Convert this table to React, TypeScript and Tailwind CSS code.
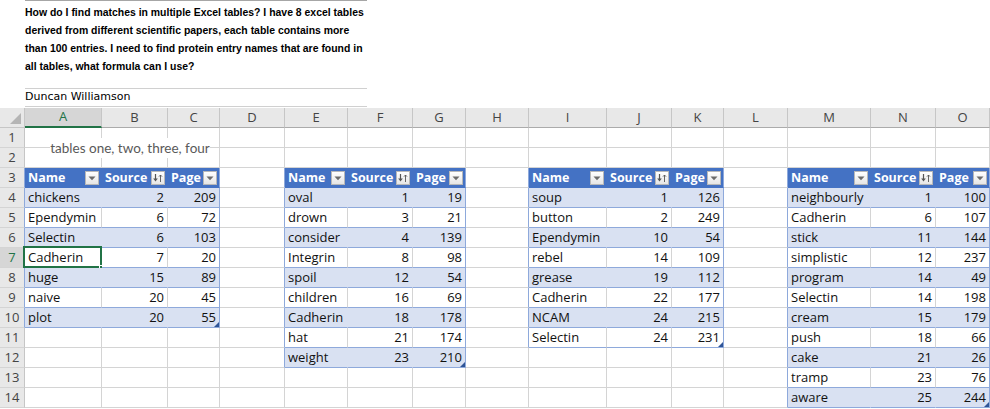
import React from "react";

const COLS = ["A", "B", "C", "D", "E", "F", "G", "H", "I", "J", "K", "L", "M", "N", "O"];

type Row = [string, number, number];

const TABLES: { start: number; rows: Row[] }[] = [
	{
		start: 0,
		rows: [
			["chickens", 2, 209],
			["Ependymin", 6, 72],
			["Selectin", 6, 103],
			["Cadherin", 7, 20],
			["huge", 15, 89],
			["naive", 20, 45],
			["plot", 20, 55],
		],
	},
	{
		start: 4,
		rows: [
			["oval", 1, 19],
			["drown", 3, 21],
			["consider", 4, 139],
			["Integrin", 8, 98],
			["spoil", 12, 54],
			["children", 16, 69],
			["Cadherin", 18, 178],
			["hat", 21, 174],
			["weight", 23, 210],
		],
	},
	{
		start: 8,
		rows: [
			["soup", 1, 126],
			["button", 2, 249],
			["Ependymin", 10, 54],
			["rebel", 14, 109],
			["grease", 19, 112],
			["Cadherin", 22, 177],
			["NCAM", 24, 215],
			["Selectin", 24, 231],
		],
	},
	{
		start: 12,
		rows: [
			["neighbourly", 1, 100],
			["Cadherin", 6, 107],
			["stick", 11, 144],
			["simplistic", 12, 237],
			["program", 14, 49],
			["Selectin", 14, 198],
			["cream", 15, 179],
			["push", 18, 66],
			["cake", 21, 26],
			["tramp", 23, 76],
			["aware", 25, 244],
		],
	},
];

const HEADERS = ["Name", "Source", "Page"];

function findTable(row: number, col: number) {
	for (const t of TABLES) {
		if (col >= t.start && col <= t.start + 2 && row >= 3 && row <= 3 + t.rows.length) {
			return t;
		}
	}
	return null;
}

function FilterButton({ sort }: { sort?: boolean }) {
	return (
		<span className="w-[14px] h-[14px] mr-[2px] shrink-0 flex items-center justify-center border border-[#b8b8b8] bg-gradient-to-b from-[#ffffff] to-[#e6e6e6]">
			{sort ? (
				<svg width="12" height="12" viewBox="0 0 12 12">
					<path d="M3.5 2v5" stroke="#555" strokeWidth="1.2" />
					<path d="M1.2 6.5h4.6L3.5 9.6z" fill="#555" />
					<path d="M8.5 3v7M7 4.6l1.5-1.6 1.5 1.6" stroke="#555" strokeWidth="0.9" fill="none" />
				</svg>
			) : (
				<svg width="10" height="10" viewBox="0 0 10 10">
					<path d="M1.5 3.5h7L5 7.2z" fill="#6b6b6b" />
				</svg>
			)}
		</span>
	);
}

function Cell({ row, col }: { row: number; col: number }) {
	const t = findTable(row, col);
	const nextT = col + 1 <= 14 ? findTable(row, col + 1) : null;
	const nextIsTableStart = !!nextT && nextT.start === col + 1;
	const selected = row === 7 && col === 0;

	if (t) {
		const k = col - t.start;
		const isLast = k === 2;
		if (row === 3) {
			return (
				<div
					className={`h-[20px] flex items-center justify-between pl-[3px] bg-[#4472c4] border-b border-b-[#4472c4] text-white font-bold text-[12.5px] ${
						isLast ? "border-r border-r-[#8ea9db]" : "border-r border-r-[#4472c4]"
					}`}
				>
					<span className="pt-[1px]">{HEADERS[k]}</span>
					<FilterButton sort={k === 1} />
				</div>
			);
		}
		const i = row - 4;
		const data = t.rows[i];
		const band = i % 2 === 0;
		const lastRow = i === t.rows.length - 1;
		const value = data[k];
		return (
			<div
				className={`relative h-[20px] flex items-center pt-[1px] text-[13px] text-[#111] border-b border-b-[#8ea9db] ${
					band ? "bg-[#d9e1f2]" : "bg-white"
				} ${
					isLast
						? "border-r border-r-[#8ea9db]"
						: band
							? "border-r border-r-[#d9e1f2]"
							: "border-r border-r-[#d4d4d4]"
				} ${k === 0 ? "justify-start pl-[3px]" : "justify-end pr-[3px]"}`}
			>
				<span>{value}</span>
				{selected && (
					<span className="absolute -top-[2px] -left-[2px] -right-[1px] -bottom-[1px] border-2 border-[#217346]">
						<span className="absolute -right-[4px] -bottom-[4px] w-[5px] h-[5px] bg-[#217346] border border-white" />
					</span>
				)}
				{isLast && lastRow && (
					<svg className="absolute right-0 bottom-0" width="5" height="5" viewBox="0 0 5 5">
						<path d="M5 0v5H0z" fill="#2f5597" />
					</svg>
				)}
			</div>
		);
	}

	return (
		<div
			className={`h-[20px] bg-white border-b border-b-[#d4d4d4] border-r ${
				nextIsTableStart ? "border-r-[#8ea9db]" : "border-r-[#d4d4d4]"
			}`}
		/>
	);
}

export default function App() {
	const rows = Array.from({ length: 14 }, (_, i) => i + 1);
	return (
		<div className="w-[990px] h-[409px] overflow-hidden bg-white font-['Open_Sans',sans-serif]">
			{/* question header */}
			<div className="h-[108px] pl-[25px]">
				<div className="w-[342px] h-full flex flex-col border-t border-t-[#a6a6a6]">
					<div className="pt-[3px] font-['Liberation_Sans',sans-serif] font-bold text-[10.45px] leading-[18px] text-black">
						<div>How do I find matches in multiple Excel tables? I have 8 excel tables</div>
						<div>derived from different scientific papers, each table contains more</div>
						<div>than 100 entries. I need to find protein entry names that are found in</div>
						<div>all tables, what formula can I use?</div>
					</div>
					<div className="mt-auto mb-[1px] h-[19px] flex items-center border-t border-b border-[#d0d0d0] font-['DejaVu_Sans',sans-serif] text-[11px] text-black">
						Duncan Williamson
					</div>
				</div>
			</div>

			{/* sheet */}
			<div className="relative grid grid-cols-[25px_77px_66px_52px_65px_63px_65px_53px_63px_78px_65px_52px_64px_83px_65px_54px]">
				{/* corner */}
				<div className="h-[20px] bg-[#e8e8e8] border-r border-b border-[#c6c6c6] flex items-end justify-end p-[3px]">
					<svg width="11" height="11" viewBox="0 0 11 11">
						<path d="M11 0v11H0z" fill="#b5b5b5" />
					</svg>
				</div>
				{COLS.map((c, i) => (
					<div
						key={c}
						className={`h-[20px] flex items-center justify-center text-[13px] border-r border-r-[#c6c6c6] ${
							i === 0
								? "bg-[#d6d6d6] text-[#217346] border-b-2 border-b-[#217346]"
								: "bg-[#e8e8e8] text-[#444] border-b border-b-[#ababab]"
						}`}
					>
						{c}
					</div>
				))}
				{rows.map((r) => (
					<React.Fragment key={r}>
						<div
							className={`h-[20px] flex items-center justify-center pt-[1px] text-[13px] border-b border-b-[#d4d4d4] border-r ${
								r === 7 ? "bg-[#d6d6d6] text-[#217346]" : "bg-[#e8e8e8] text-[#444]"
							} ${r >= 3 && r <= 10 ? "border-r-[#8ea9db]" : "border-r-[#c6c6c6]"}`}
						>
							{r}
						</div>
						{COLS.map((_, c) => (
							<Cell key={c} row={r} col={c} />
						))}
					</React.Fragment>
				))}
				{/* floating text box */}
				<div className="absolute left-[50px] top-[30px] w-[160px] h-[20px] bg-white flex items-center justify-center font-['Lato',sans-serif] text-[13.5px] text-[#595959]">
					tables one, two, three, four
				</div>
			</div>
		</div>
	);
}
